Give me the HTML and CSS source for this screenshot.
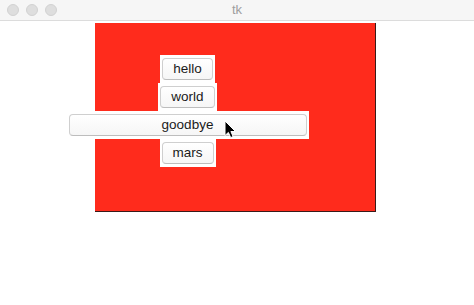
FILE: index.html
```html
<!DOCTYPE html>
<html>
<head>
<meta charset="utf-8">
<link rel="stylesheet" href="styles.css">
</head>
<body>
<div class="window">
  <div class="titlebar">
    <div class="lights">
      <span class="light"></span><span class="light"></span><span class="light"></span>
    </div>
    <div class="title">tk</div>
  </div>
  <div class="content">
    <div class="canvas">
      <div class="stack">
        <div class="frame"><button class="btn">hello</button></div>
        <div class="frame"><button class="btn">world</button></div>
        <div class="frame wide"><button class="btn">goodbye</button></div>
        <div class="frame"><button class="btn">mars</button></div>
      </div>
    </div>
    <svg class="cursor" width="13" height="19" viewBox="0 0 13 19">
      <path d="M1 1 L1 15.5 L4.4 12.4 L6.7 17.6 L9.1 16.5 L6.9 11.5 L11.5 11.5 Z" fill="#000" stroke="#fff" stroke-width="1" stroke-linejoin="round"/>
    </svg>
  </div>
</div>
</body>
</html>
```
FILE: styles.css
```css
html, body {
  margin: 0;
  padding: 0;
  background: #ffffff;
}
body {
  width: 474px;
  height: 305px;
  overflow: hidden;
  font-family: "Liberation Sans", Arial, sans-serif;
}
.window {
  width: 474px;
  height: 305px;
  background: #ffffff;
}
.titlebar {
  height: 20px;
  background: #f6f6f6;
  border-bottom: 1px solid #dcdcdc;
  display: flex;
  align-items: center;
  position: relative;
}
.lights {
  display: flex;
  gap: 7px;
  padding-left: 7px;
}
.light {
  width: 12px;
  height: 12px;
  border-radius: 50%;
  background: #dedede;
  border: 0.5px solid #d2d2d2;
  box-sizing: border-box;
}
.title {
  position: absolute;
  left: 0;
  right: 0;
  top: 0;
  height: 20px;
  line-height: 20px;
  text-align: center;
  font-size: 13px;
  color: #9e9e9e;
}
.content {
  position: relative;
  padding-top: 2px;
}
.canvas {
  margin-left: 95px;
  width: 185px;
  height: 156px;
  padding: 32px 95px 0 0;
  background: #ff2b1c;
  border-right: 1px solid #3a1a18;
  border-bottom: 1px solid #3a1a18;
  display: flex;
  flex-direction: column;
  align-items: center;
}
.stack {
  display: flex;
  flex-direction: column;
  align-items: center;
}
.frame {
  background: #ffffff;
  padding: 3px 2px;
  display: flex;
  flex-shrink: 0;
}
.frame.wide {
  width: 238px;
}
.btn {
  margin: 0;
  font-family: "Liberation Sans", Arial, sans-serif;
  font-size: 13.5px;
  line-height: 16px;
  color: #1a1a1a;
  padding: 2px 10px;
  border: 1px solid #cfcfcf;
  border-bottom-color: #bdbdbd;
  border-radius: 4px;
  background: linear-gradient(#ffffff, #f6f6f6);
  width: 100%;
  white-space: nowrap;
}
.cursor {
  position: absolute;
  left: 224px;
  top: 99px;
}
```
